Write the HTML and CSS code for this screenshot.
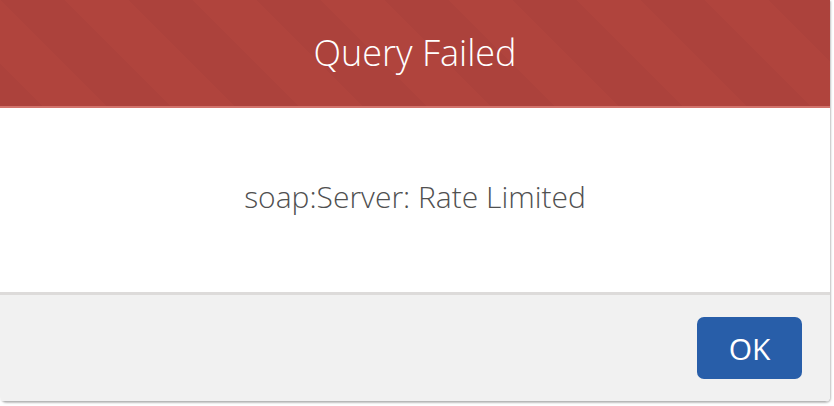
FILE: index.html
```html
<!DOCTYPE html>
<html>
<head>
<meta charset="utf-8">
<link rel="stylesheet" href="styles.css">
</head>
<body>
<div class="modal">
  <header class="modal-header">
    <h2 class="modal-title">Query Failed</h2>
  </header>
  <div class="modal-body">
    <p class="message">soap:Server: Rate Limited</p>
  </div>
  <footer class="modal-footer">
    <button class="btn-ok">OK</button>
  </footer>
</div>
</body>
</html>
```
FILE: styles.css
```css
html, body {
  margin: 0;
  padding: 0;
  background: #ffffff;
}
body {
  width: 834px;
  height: 406px;
  font-family: "Open Sans", "Lato", sans-serif;
}
.modal {
  width: 830px;
  height: 402px;
  display: flex;
  flex-direction: column;
  border-radius: 0 0 5px 5px;
  overflow: hidden;
  box-shadow: 1px 1px 2px rgba(0,0,0,0.25);
}
.modal-header {
  flex: none;
  display: flex;
  align-items: center;
  justify-content: center;
  background-color: #b0443d;
  background-image: linear-gradient(45deg, rgba(0,0,0,0.025) 25%, transparent 25%, transparent 50%, rgba(0,0,0,0.025) 50%, rgba(0,0,0,0.025) 75%, transparent 75%, transparent);
  background-size: 128px 128px;
  border-bottom: 2px solid #d2736c;
  box-sizing: border-box;
  height: 108px;
}
.modal-title {
  margin: 0;
  color: #ffffff;
  font-weight: 300;
  font-size: 36px;
  line-height: 1;
}
.modal-body {
  flex: 1;
  background: #ffffff;
  display: flex;
  align-items: center;
  justify-content: center;
  padding-bottom: 8px;
}
.message {
  margin: 0;
  color: #505050;
  font-size: 30px;
  font-weight: 300;
}
.modal-footer {
  flex: none;
  height: 110px;
  box-sizing: border-box;
  border-top: 3px solid #dddbda;
  border-bottom: 1px solid #b8b8b8;
  background: #f1f1f1;
  display: flex;
  align-items: center;
  justify-content: flex-end;
  padding: 0 28px 0 0;
}
.btn-ok {
  width: 105px;
  height: 62px;
  border: none;
  border-radius: 7px;
  background: #285ea9;
  color: #ffffff;
  font-family: "Open Sans", "Lato", sans-serif;
  font-size: 30px;
  font-weight: 400;
  padding: 0;
}
```
